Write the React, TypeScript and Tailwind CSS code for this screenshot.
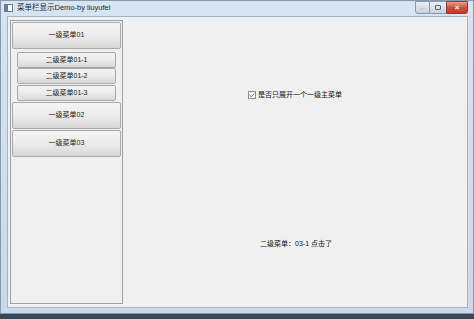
import { Check } from 'lucide-react';

const font = { fontFamily: '"Liberation Sans", "Noto Sans CJK SC", sans-serif' };

function TopButton({ label, className = '' }: { label: string; className?: string }) {
  return (
    <div className={`h-[27px] mx-[1px] flex items-center justify-center rounded-[2px] border border-[#a9a9a9] bg-gradient-to-b from-[#f4f4f4] via-[#ececec] to-[#d6d6d6] text-[7px] text-[#222] ${className}`}>
      {label}
    </div>
  );
}

function SubButton({ label, className = '' }: { label: string; className?: string }) {
  return (
    <div className={`h-[16px] mx-[6px] flex items-center justify-center rounded-[2px] border border-[#a9a9a9] bg-gradient-to-b from-[#f4f4f4] via-[#ebebeb] to-[#d8d8d8] text-[7px] text-[#222] ${className}`}>
      {label}
    </div>
  );
}

export default function App() {
  return (
    <div style={font} className="w-[474px] h-[319px] flex flex-col bg-[#3b4652] overflow-hidden">
      <div className="flex flex-col flex-1 bg-gradient-to-b from-[#d7e4f2] to-[#c9d9ea] border border-[#8a9aad]">
        {/* title bar */}
        <div className="h-[15px] flex items-start relative">
          <div className="mt-[3px] ml-[3px] w-[9px] h-[8px] border border-[#6b7b8e] bg-white flex">
            <div className="w-[3px] bg-[#6b7b8e]" />
          </div>
          <div className="ml-[4px] mt-[2px] text-[7.5px] leading-[10px] text-[#1c2a3a]">菜单栏显示Demo-by liuyufei</div>
          <div className="ml-auto mr-[5px] flex h-[13px]">
            <div className="w-[15px] border border-[#8d99a7] rounded-bl-[3px] bg-gradient-to-b from-[#e8eef5] to-[#c9d3de] flex items-center justify-center">
              <div className="w-[6px] h-[2px] mt-[3px] bg-[#5a6573] border border-[#c8d0da]" />
            </div>
            <div className="w-[16px] border-y border-[#8d99a7] bg-gradient-to-b from-[#e8eef5] to-[#c9d3de] flex items-center justify-center">
              <div className="w-[6px] h-[5px] border border-[#5a6573] rounded-[1px]" />
            </div>
            <div className="w-[22px] border border-[#8a3a30] rounded-br-[3px] bg-gradient-to-b from-[#e7a195] via-[#d0503e] to-[#c23a26] flex items-center justify-center text-white text-[8px] font-bold leading-none">
              ×
            </div>
          </div>
        </div>
        <div className="flex flex-1 pl-[6px] pr-[5px] pb-[5px]">
          <div className="flex-1 flex bg-[#f0f0f0] border border-[#a5b3c3]">
            {/* left panel */}
            <div className="ml-[2px] mt-[3px] mb-[3px] w-[113px] border border-[#a0a0a0] flex flex-col pt-[1px]">
              <TopButton label="一级菜单01" />
              <SubButton label="二级菜单01-1" className="mt-[3px]" />
              <SubButton label="二级菜单01-2" />
              <SubButton label="二级菜单01-3" className="mt-[1px]" />
              <TopButton label="一级菜单02" className="mt-[1px]" />
              <TopButton label="一级菜单03" className="mt-[1px]" />
            </div>
            {/* right area */}
            <div className="flex-1 flex flex-col items-center text-[7px] text-[#111]">
              <div className="mt-[73px] flex items-center gap-[2px] ml-[0px]">
                <div className="w-[8px] h-[8px] border border-[#8e8f8f] bg-gradient-to-b from-[#f0f0f0] to-white flex items-center justify-center">
                  <Check size={7} strokeWidth={3} color="#3a4b6a" />
                </div>
                <span>是否只展开一个一级主菜单</span>
              </div>
              <div className="mt-[138px] ml-[2px]">二级菜单：03-1 点击了</div>
            </div>
          </div>
        </div>
      </div>
      <div className="h-[5px]" />
    </div>
  );
}
